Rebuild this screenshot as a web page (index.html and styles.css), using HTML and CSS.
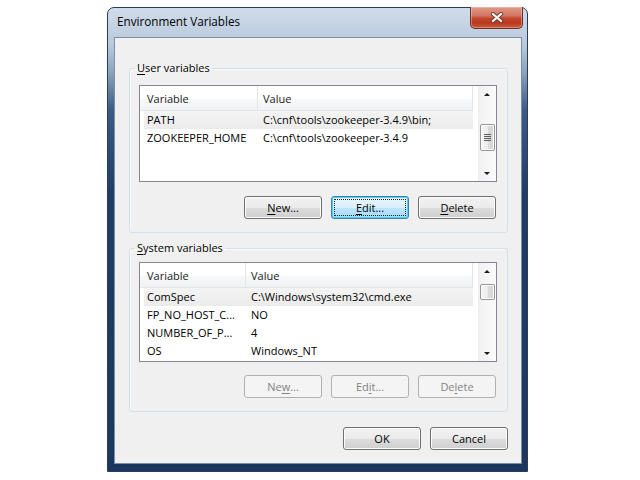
FILE: index.html
```html
<!DOCTYPE html>
<html lang="en">

<head>
    <meta charset="UTF-8">
    <title>Environment Variables</title>
    <link rel="stylesheet" href="styles.css">
</head>

<body>

    <div class="window">
        <div class="titlebar">
            <span class="title">Environment Variables</span>
            <button class="close-btn" title="Close">
                <svg width="14" height="11" viewBox="0 0 14 11">
                    <path d="M2.8 1.8 L11.2 9.2 M11.2 1.8 L2.8 9.2" stroke="#5b3029" stroke-width="3.8" stroke-linecap="round" />
                    <path d="M2.8 1.8 L11.2 9.2 M11.2 1.8 L2.8 9.2" stroke="#f4f1f1" stroke-width="2.2" stroke-linecap="round" />
                </svg>
            </button>
        </div>

        <div class="client">
            <!-- User variables -->
            <fieldset class="group user-group">
                <legend><u>U</u>ser variables</legend>
                <div class="listview user">
                    <div class="lv-main">
                        <div class="lv-head">
                            <span class="col-var">Variable</span>
                            <span class="col-val">Value</span>
                        </div>
                        <div class="lv-row selected">
                            <span class="col-var">PATH</span>
                            <span class="col-val">C:\cnf\tools\zookeeper-3.4.9\bin;</span>
                        </div>
                        <div class="lv-row">
                            <span class="col-var">ZOOKEEPER_HOME</span>
                            <span class="col-val">C:\cnf\tools\zookeeper-3.4.9</span>
                        </div>
                    </div>
                    <div class="scrollbar">
                        <div class="sb-arrow up"></div>
                        <div class="sb-track">
                            <div class="sb-thumb" style="margin-top: 21px; height: 27px;"><span class="grip"></span></div>
                        </div>
                        <div class="sb-arrow down"></div>
                    </div>
                </div>
                <div class="btn-row">
                    <button class="btn"><u>N</u>ew...</button>
                    <button class="btn default"><u>E</u>dit...</button>
                    <button class="btn"><u>D</u>elete</button>
                </div>
            </fieldset>

            <!-- System variables -->
            <fieldset class="group system-group">
                <legend><u>S</u>ystem variables</legend>
                <div class="listview system">
                    <div class="lv-main">
                        <div class="lv-head">
                            <span class="col-var">Variable</span>
                            <span class="col-val">Value</span>
                        </div>
                        <div class="lv-row selected">
                            <span class="col-var">ComSpec</span>
                            <span class="col-val">C:\Windows\system32\cmd.exe</span>
                        </div>
                        <div class="lv-row">
                            <span class="col-var">FP_NO_HOST_C...</span>
                            <span class="col-val">NO</span>
                        </div>
                        <div class="lv-row">
                            <span class="col-var">NUMBER_OF_P...</span>
                            <span class="col-val">4</span>
                        </div>
                        <div class="lv-row">
                            <span class="col-var">OS</span>
                            <span class="col-val">Windows_NT</span>
                        </div>
                    </div>
                    <div class="scrollbar">
                        <div class="sb-arrow up"></div>
                        <div class="sb-track">
                            <div class="sb-thumb" style="margin-top: 4px; height: 16px;"></div>
                        </div>
                        <div class="sb-arrow down"></div>
                    </div>
                </div>
                <div class="btn-row">
                    <button class="btn" disabled>Ne<u>w</u>...</button>
                    <button class="btn" disabled>Ed<u>i</u>t...</button>
                    <button class="btn" disabled>De<u>l</u>ete</button>
                </div>
            </fieldset>

            <div class="dialog-buttons">
                <button class="btn">OK</button>
                <button class="btn">Cancel</button>
            </div>
        </div>
    </div>

</body>

</html>
```

FILE: styles.css
```css
/* Windows 7 dialog look */
:root {
    --ui-font: "Open Sans", "Noto Sans", Arial, sans-serif;
    --dialog-bg: #f0f0f0;
    --group-line: #d5dfe5;
    --list-border: #828790;
    --btn-border: #707070;
}

body {
    margin: 0;
    width: 640px;
    height: 480px;
    overflow: hidden;
    background: #ffffff;
    font-family: var(--ui-font);
    font-size: 11px;
    color: #000;
}

u {
    text-decoration-thickness: 1px;
    text-underline-offset: 2px;
}

/* Window frame */
.window {
    margin: 7px 0 0 107px;
    width: 421px;
    height: 465px;
    box-sizing: border-box;
    border: 1px solid #2b3d55;
    border-radius: 7px 7px 0 0;
    padding: 0 5px 7px 6px;
    display: flex;
    flex-direction: column;
    background: linear-gradient(180deg, #d0dcea 0%, #b8c9dc 8%, #8aa2bd 14%, #3b5c86 22%, #1f3d66 40%, #1b3760 100%);
}

.titlebar {
    height: 29px;
    display: flex;
    justify-content: space-between;
    align-items: flex-start;
    flex-shrink: 0;
}

.title {
    padding: 6px 0 0 3px;
    line-height: 15px;
    font-size: 11.7px;
    color: #000;
}

.close-btn {
    margin: -1px -1px 0 0;
    width: 53px;
    height: 22px;
    padding: 0;
    border: 1px solid #6e2f26;
    border-top: none;
    border-radius: 0 0 5px 5px;
    background: linear-gradient(to bottom, #e29a8a 0%, #d27764 40%, #c2432b 55%, #b8391f 75%, #c9583a 100%);
    box-shadow: inset 0 0 0 1px rgba(255, 215, 200, 0.4);
    display: flex;
    align-items: center;
    justify-content: center;
}

/* Client area */
.client {
    flex: 1;
    border: 1px solid #7f8fa3;
    background: var(--dialog-bg);
    display: flex;
    flex-direction: column;
}

.group {
    margin: 23px 13px 0 14px;
    padding: 10px 10px 13px 9px;
    border: 1px solid var(--group-line);
    border-radius: 3px;
    box-shadow: inset 1px 1px 0 #fafafa;
    min-width: 0;
}

.group.system-group {
    margin-top: 8px;
    padding-top: 7px;
}

.group legend {
    margin-left: -4px;
    padding: 0 2px;
    line-height: 14px;
    font-size: 11px;
}

/* List view */
.listview {
    display: flex;
    height: 97px;
    box-sizing: border-box;
    border: 1px solid var(--list-border);
    background: #fff;
    --col-width: 118px;
}

.listview.system {
    height: 100px;
    --col-width: 106px;
}

.lv-main {
    flex: 1;
    overflow: hidden;
}

.lv-head {
    display: flex;
    height: 25px;
    line-height: 25px;
    width: 333px;
    box-sizing: border-box;
    border-bottom: 1px solid #e3e5e8;
    background: linear-gradient(to bottom, #ffffff 0%, #ffffff 55%, #f7f8fa 56%, #f1f2f4 100%);
    color: #222;
}

.lv-head span {
    border-right: 1px solid #e3e5e8;
}

.col-var {
    width: var(--col-width);
    flex-shrink: 0;
    box-sizing: border-box;
    padding-left: 7px;
    white-space: nowrap;
}

.col-val {
    flex: 1;
    padding-left: 5px;
    white-space: nowrap;
}

.lv-row {
    display: flex;
    height: 18px;
    line-height: 18px;
    width: 333px;
}

.lv-row.selected {
    background: linear-gradient(to bottom, #f4f4f4, #ebebeb);
    box-shadow: inset 4px 0 0 #fff;
}

/* Scrollbar */
.scrollbar {
    width: 17px;
    flex-shrink: 0;
    display: flex;
    flex-direction: column;
    border-left: 1px solid #ececec;
    background: linear-gradient(to right, #f1f1f1, #fbfbfb);
}

.sb-arrow {
    height: 17px;
    position: relative;
    flex-shrink: 0;
}

.sb-arrow::after {
    content: "";
    position: absolute;
    left: 5px;
    border-left: 3.5px solid transparent;
    border-right: 3.5px solid transparent;
}

.sb-arrow.up::after {
    top: 7px;
    border-bottom: 3px solid #1a1a1a;
}

.sb-arrow.down::after {
    top: 8px;
    border-top: 3px solid #1a1a1a;
}

.sb-track {
    flex: 1;
    padding: 0 1px;
}

.sb-thumb {
    box-sizing: border-box;
    border: 1px solid #979797;
    border-radius: 2px;
    background: linear-gradient(to right, #f5f5f5 0%, #ececec 50%, #dcdcdc 51%, #d6d6d6 100%);
    box-shadow: inset 0 0 0 1px #fbfbfb;
    display: flex;
    align-items: center;
    justify-content: center;
}

.grip {
    width: 7px;
    height: 7px;
    background: repeating-linear-gradient(to bottom, #5c5c5c 0, #5c5c5c 1px, transparent 1px, transparent 2px);
}

/* Buttons */
.btn-row,
.dialog-buttons {
    display: flex;
    justify-content: flex-end;
    gap: 9px;
}

.btn-row {
    margin-top: 14px;
    padding-right: 1px;
}

.system-group .btn-row {
    margin-top: 13px;
}

.dialog-buttons {
    margin: 15px 13px 0 0;
}

.btn {
    width: 78px;
    height: 23px;
    padding: 0;
    border: 1px solid var(--btn-border);
    border-radius: 3px;
    background: linear-gradient(to bottom, #f2f2f2 0%, #ebebeb 50%, #dddddd 51%, #cfcfcf 100%);
    box-shadow: inset 0 0 0 1px #fcfcfc;
    font-family: var(--ui-font);
    font-size: 11px;
    color: #000;
}

.btn.default {
    border-color: #3c7fb1;
    background: linear-gradient(to bottom, #eaf6fd 0%, #d9f0fc 50%, #bee6fd 51%, #a7d9f5 100%);
    box-shadow: inset 0 0 0 1px #48d3f7;
    outline: 1px dotted #222;
    outline-offset: -4px;
}

.btn:disabled {
    border-color: #adb2b5;
    background: #f4f4f4;
    box-shadow: none;
    color: #838383;
}
```
